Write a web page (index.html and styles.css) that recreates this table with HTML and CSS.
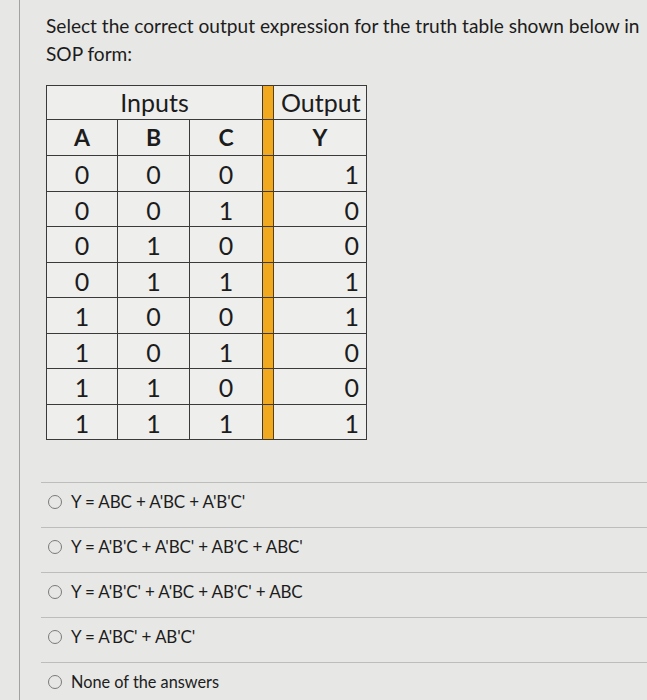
FILE: index.html
```html
<!DOCTYPE html>
<html>
<head>
<meta charset="utf-8">
<link rel="stylesheet" href="styles.css">
</head>
<body>
<div class="page">
  <div class="content">
    <p class="question">Select the correct output expression for the truth table shown below in SOP form:</p>
    <table class="truth">
      <tr class="h1">
        <td colspan="3" class="inputs">Inputs</td>
        <td class="bar"></td>
        <td class="out">Output</td>
      </tr>
      <tr class="h2">
        <td class="ca">A</td><td class="cb">B</td><td class="cc">C</td><td class="bar"></td><td class="cy">Y</td>
      </tr>
      <tr><td>0</td><td>0</td><td>0</td><td class="bar"></td><td class="y">1</td></tr>
      <tr><td>0</td><td>0</td><td>1</td><td class="bar"></td><td class="y">0</td></tr>
      <tr><td>0</td><td>1</td><td>0</td><td class="bar"></td><td class="y">0</td></tr>
      <tr><td>0</td><td>1</td><td>1</td><td class="bar"></td><td class="y">1</td></tr>
      <tr><td>1</td><td>0</td><td>0</td><td class="bar"></td><td class="y">1</td></tr>
      <tr><td>1</td><td>0</td><td>1</td><td class="bar"></td><td class="y">0</td></tr>
      <tr><td>1</td><td>1</td><td>0</td><td class="bar"></td><td class="y">0</td></tr>
      <tr><td>1</td><td>1</td><td>1</td><td class="bar"></td><td class="y">1</td></tr>
    </table>
  </div>
  <div class="options">
    <div class="opt"><span class="radio"></span><span class="label">Y = ABC + A'BC + A'B'C'</span></div>
    <div class="opt"><span class="radio"></span><span class="label">Y = A'B'C + A'BC' + AB'C + ABC'</span></div>
    <div class="opt"><span class="radio"></span><span class="label">Y = A'B'C' + A'BC + AB'C' + ABC</span></div>
    <div class="opt"><span class="radio"></span><span class="label">Y = A'BC' + AB'C'</span></div>
    <div class="opt"><span class="radio"></span><span class="label none">None of the answers</span></div>
  </div>
</div>
</body>
</html>
```

FILE: styles.css
```css
html, body {
  margin: 0;
  padding: 0;
  background: #e7e7e5;
}
body {
  font-family: Lato, "Open Sans", sans-serif;
  color: #1c1c1c;
  width: 647px;
  height: 700px;
  overflow: hidden;
}
.page {
  margin-left: 19px;
  border-left: 1px solid #a2a2a2;
  height: 700px;
  display: flex;
  flex-direction: column;
}
.content {
  padding-left: 26px;
  padding-top: 12px;
}
.question {
  margin: 0;
  font-size: 19.1px;
  line-height: 28px;
  width: 602px;
}
.truth {
  margin-top: 17px;
  border-collapse: collapse;
  border: 1.5px solid #333;
  background: #eeeeec;
  font-size: 25px;
  table-layout: fixed;
}
.truth td {
  border: 1px solid #3a3a3a;
  padding: 0;
  height: 35.5px;
  text-align: center;
  vertical-align: middle;
  line-height: 1;
  padding-top: 3px;
  box-sizing: border-box;
}
.truth tr.h1 td {
  height: 34px;
  padding-top: 0;
}
.truth tr.h2 td {
  height: 36px;
  font-weight: 700;
  font-size: 23px;
  padding-top: 0;
}
.ca { width: 71px; }
.cb { width: 72px; }
.cc { width: 73px; }
.cy { width: 93px; }
.truth td.bar {
  width: 11px;
  background: #f1a91f;
  border-left: 1.5px solid #5a4010;
  border-right: 1.5px solid #5a4010;
}
.truth td.out {
  text-align: left;
  padding-left: 7px;
}
.truth td.y {
  text-align: right;
  padding-right: 7px;
}
.options {
  margin-top: 42px;
  margin-left: 21px;
}
.opt {
  border-top: 1px solid #bdbdbb;
  height: 45px;
  display: flex;
  align-items: center;
  padding-bottom: 7px;
  box-sizing: border-box;
  font-size: 17px;
}
.radio {
  width: 14px;
  height: 14px;
  border: 1.5px solid #7a7a7a;
  border-radius: 50%;
  margin-left: 7px;
  margin-right: 9px;
  box-sizing: border-box;
  flex: none;
}
.label {
  letter-spacing: -0.15px;
}
.none {
  font-size: 16.3px;
  letter-spacing: 0;
}
```
